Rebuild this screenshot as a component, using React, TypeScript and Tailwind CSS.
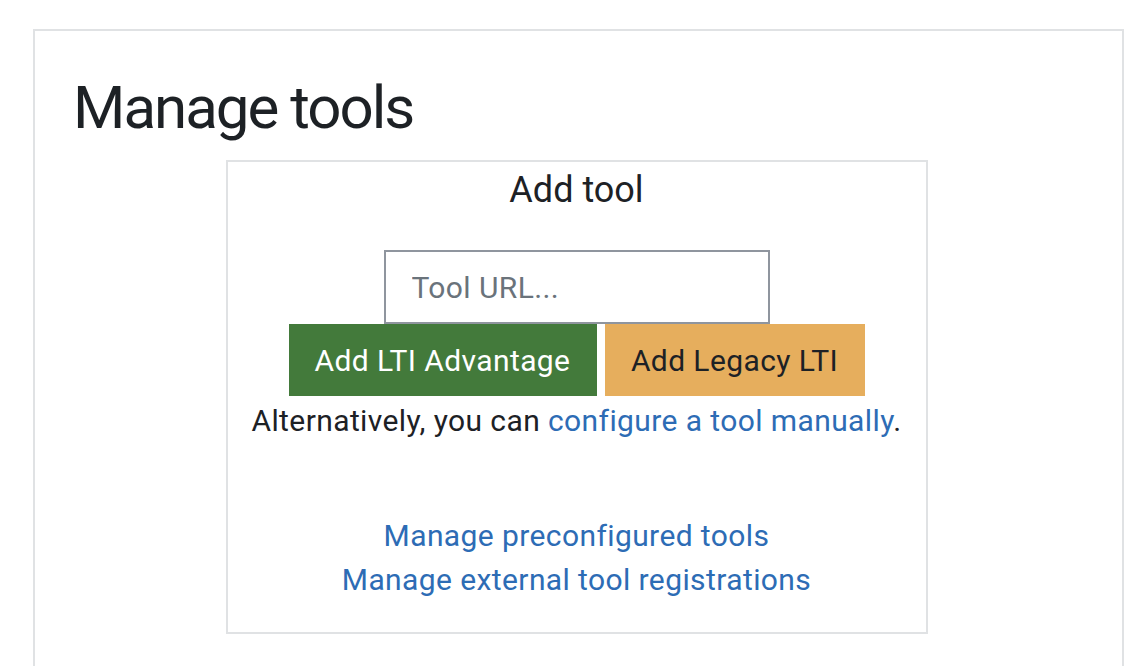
export default function App() {
	return (
		<main
			className="min-h-screen bg-white pl-[33px] pr-[16px] pt-[29px] text-[#1d2125]"
			style={{ fontFamily: 'Roboto, "Noto Sans", sans-serif' }}
		>
			<section className="border-2 border-[#e0e2e4] pl-[38px] pr-[42px] pt-[41px] pb-[40px]">
				<h2 className="text-[60px] leading-[72px] font-normal tracking-[-2px]">
					Manage tools
				</h2>
				<div className="mx-auto mt-[16px] flex w-[702px] flex-col items-center border-2 border-[#e0e2e4] pt-[7px] pb-[30px] tracking-[0.4px]">
					<h3 className="text-[36px] leading-[43px] font-normal tracking-normal">Add tool</h3>
					<input
						type="text"
						placeholder="Tool URL..."
						className="mt-[38px] h-[74px] w-[386px] border-2 border-[#8f959e] bg-white px-[26px] text-[30px] tracking-[0.4px] placeholder:text-[#6a737b] outline-none"
					/>
					<div className="flex gap-[8px]">
						<button className="h-[72px] w-[308px] bg-[#437a3b] text-[30px] tracking-[0.4px] text-white">
							Add LTI Advantage
						</button>
						<button className="h-[72px] w-[260px] bg-[#e6ae5d] text-[30px] tracking-[0.4px] text-[#1d2125]">
							Add Legacy LTI
						</button>
					</div>
					<p className="pt-[2px] text-[30px] leading-[45px]">
						Alternatively, you can{" "}
						<a href="#" className="text-[#2d6cb5]">
							configure a tool manually
						</a>
						.
					</p>
					<div className="mt-[71px] flex flex-col items-center text-[30px] leading-[44px] text-[#2d6cb5]">
						<a href="#">Manage preconfigured tools</a>
						<a href="#">Manage external tool registrations</a>
					</div>
				</div>
			</section>
		</main>
	);
}
